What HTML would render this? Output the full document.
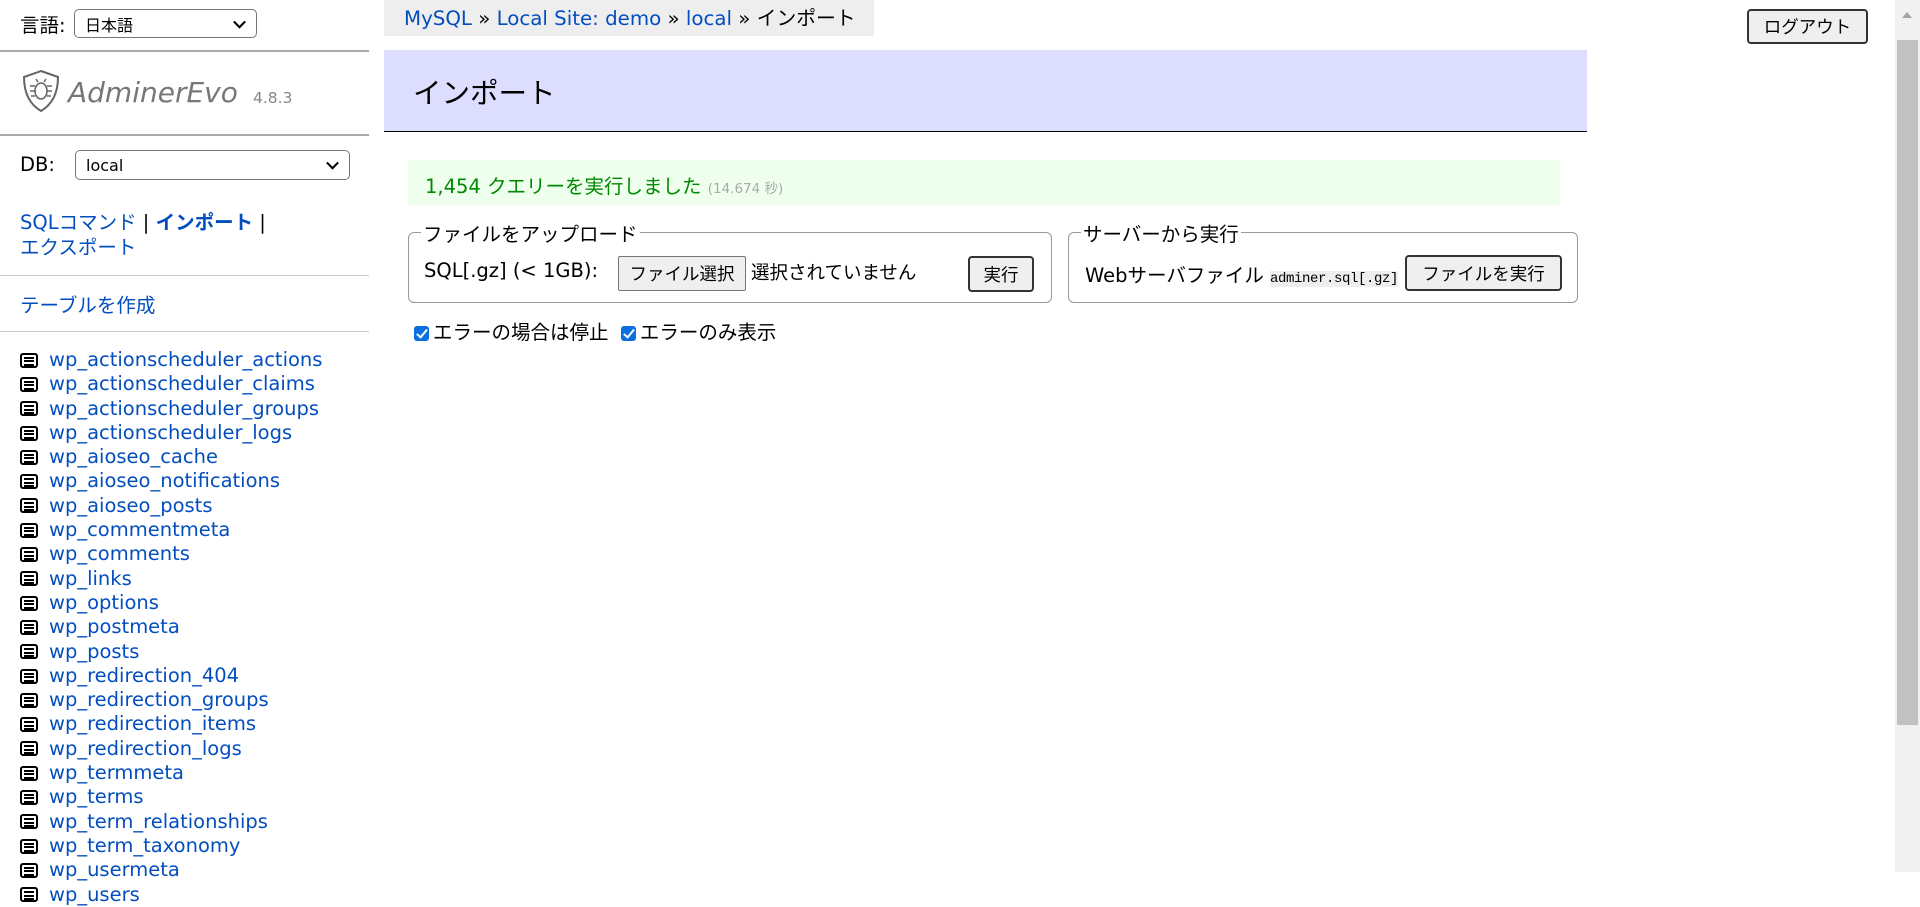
<!DOCTYPE html>
<html><head><meta charset="utf-8">
<style>
*{box-sizing:border-box}
body{margin:0;width:1920px;height:872px;overflow:hidden;background:#fff;font-family:"DejaVu Sans","Noto Sans CJK JP",sans-serif;font-size:19.5px;color:#000;position:relative}
a{color:#034ebf;text-decoration:none}
.abs{position:absolute}
.hr{position:absolute;left:0;width:369px;height:2px;background:#aaa}
.sel{position:absolute;border:1px solid #767676;border-radius:5px;background:#fff;font-size:16px;padding-left:10px;display:flex;align-items:center}
.sel:after{content:"";position:absolute;right:12px;top:50%;width:7px;height:7px;border-right:2px solid #000;border-bottom:2px solid #000;transform:translateY(-70%) rotate(45deg)}
.list{position:absolute;left:20px;top:348px;line-height:24.3px;font-size:19.5px}
.list div{display:flex;align-items:center;height:24.3px}
.ic{width:18px;height:15px;border:2px solid #000;border-radius:3px;margin-right:11px;position:relative;flex:none;background:
linear-gradient(#000,#000) 2px 2px/10px 2px no-repeat,linear-gradient(#000,#000) 2px 5.5px/10px 2px no-repeat,linear-gradient(#000,#000) 2px 9px/10px 2px no-repeat}
.btn{position:absolute;background:#efefef;border:2px solid #333;border-radius:4px;font-size:17.5px;display:flex;align-items:center;justify-content:center}
fieldset{position:absolute;border:1px solid #999;border-radius:6px;margin:0;padding:0}
legend{font-size:19.5px;padding:0 2px;margin-left:12px}
.cb{display:inline-block;width:15px;height:15px;background:#0b6fe0;border-radius:3px;vertical-align:-2px;position:relative;margin-right:4px}
.cb:after{content:"";position:absolute;left:5px;top:1px;width:4px;height:9px;border-right:2px solid #fff;border-bottom:2px solid #fff;transform:rotate(40deg)}
</style></head><body>
<!-- sidebar -->
<div class="abs" style="left:20px;top:9px;font-size:19.5px">言語:</div>
<div class="sel" style="left:74px;top:9px;width:183px;height:29px">日本語</div>
<div class="hr" style="top:50px"></div>
<svg class="abs" style="left:21px;top:69px" width="40" height="44" viewBox="0 0 40 44"><path d="M20 2 L37 8 Q37 32 20 42 Q3 32 3 8 Z" fill="none" stroke="#666" stroke-width="2"/><ellipse cx="20" cy="22" rx="6" ry="8" fill="none" stroke="#666" stroke-width="1.6"/><path d="M14 17 H9 M14 22 H9 M14 27 H10 M26 17 H31 M26 22 H31 M26 27 H30 M17 13 L15 10 M23 13 L25 10" stroke="#666" stroke-width="1.5"/></svg>
<div class="abs" style="left:68px;top:76px;font-size:28px;font-style:italic;color:#777">AdminerEvo</div>
<div class="abs" style="left:253px;top:89px;font-size:15.5px;color:#888">4.8.3</div>
<div class="hr" style="top:134px"></div>
<div class="abs" style="left:20px;top:153px">DB:</div>
<div class="sel" style="left:75px;top:150px;width:275px;height:30px">local</div>
<div class="abs" style="left:20px;top:210px;line-height:25px"><a href="#">SQLコマンド</a> | <a href="#" style="font-weight:bold">インポート</a> |<br><a href="#">エクスポート</a></div>
<div class="hr" style="top:275px;height:1px;background:#ccc"></div>
<div class="abs" style="left:20px;top:289px"><a href="#">テーブルを作成</a></div>
<div class="hr" style="top:331px;height:1px;background:#ccc"></div>
<div class="list">
<div><span class="ic"></span><a href="#">wp_actionscheduler_actions</a></div>
<div><span class="ic"></span><a href="#">wp_actionscheduler_claims</a></div>
<div><span class="ic"></span><a href="#">wp_actionscheduler_groups</a></div>
<div><span class="ic"></span><a href="#">wp_actionscheduler_logs</a></div>
<div><span class="ic"></span><a href="#">wp_aioseo_cache</a></div>
<div><span class="ic"></span><a href="#">wp_aioseo_notifications</a></div>
<div><span class="ic"></span><a href="#">wp_aioseo_posts</a></div>
<div><span class="ic"></span><a href="#">wp_commentmeta</a></div>
<div><span class="ic"></span><a href="#">wp_comments</a></div>
<div><span class="ic"></span><a href="#">wp_links</a></div>
<div><span class="ic"></span><a href="#">wp_options</a></div>
<div><span class="ic"></span><a href="#">wp_postmeta</a></div>
<div><span class="ic"></span><a href="#">wp_posts</a></div>
<div><span class="ic"></span><a href="#">wp_redirection_404</a></div>
<div><span class="ic"></span><a href="#">wp_redirection_groups</a></div>
<div><span class="ic"></span><a href="#">wp_redirection_items</a></div>
<div><span class="ic"></span><a href="#">wp_redirection_logs</a></div>
<div><span class="ic"></span><a href="#">wp_termmeta</a></div>
<div><span class="ic"></span><a href="#">wp_terms</a></div>
<div><span class="ic"></span><a href="#">wp_term_relationships</a></div>
<div><span class="ic"></span><a href="#">wp_term_taxonomy</a></div>
<div><span class="ic"></span><a href="#">wp_usermeta</a></div>
<div><span class="ic"></span><a href="#">wp_users</a></div>
</div>
<!-- content -->
<div class="abs" style="left:384px;top:0;width:490px;height:36px;background:#eee;padding:2px 0 0 20px;font-size:19.8px;white-space:nowrap"><a href="#">MySQL</a> » <a href="#">Local Site: demo</a> » <a href="#">local</a> » インポート</div>
<div class="btn" style="left:1747px;top:9px;width:121px;height:35px">ログアウト</div>
<div class="abs" style="left:384px;top:50px;width:1203px;height:82px;background:#ddf;border-bottom:1px solid #000;padding:21px 0 0 29px;font-size:28.5px">インポート</div>
<div class="abs" style="left:408px;top:160px;width:1152px;height:45px;background:#efe;padding:10px 0 0 17px;color:#080">1,454 クエリーを実行しました <span style="color:#aaa;font-size:13.5px">(14.674 秒)</span></div>
<fieldset style="left:408px;top:218px;width:644px;height:85px"><legend>ファイルをアップロード</legend></fieldset>
<div class="abs" style="left:424px;top:259px">SQL[.gz] (&lt; 1GB):</div>
<div class="abs" style="left:618px;top:256px;width:128px;height:35px;background:#efefef;border:1px solid #767676;border-radius:2px;font-size:17.5px;display:flex;align-items:center;justify-content:center">ファイル選択</div>
<div class="abs" style="left:751px;top:259px;font-size:18.5px">選択されていません</div>
<div class="btn" style="left:968px;top:256px;width:66px;height:36px">実行</div>
<fieldset style="left:1068px;top:218px;width:510px;height:85px"><legend>サーバーから実行</legend></fieldset>
<div class="abs" style="left:1085px;top:259px">Webサーバファイル <code style="font-family:'Liberation Mono',monospace;font-size:14px;background:#eee;letter-spacing:-0.4px">adminer.sql[.gz]</code></div>
<div class="btn" style="left:1405px;top:255px;width:157px;height:36px">ファイルを実行</div>
<div class="abs" style="left:414px;top:316px"><span class="cb"></span>エラーの場合は停止&nbsp; <span class="cb"></span>エラーのみ表示</div>
<!-- scrollbar -->
<div class="abs" style="left:1895px;top:0;width:25px;height:872px;background:#f1f1f1"></div>
<div class="abs" style="left:1897px;top:40px;width:21px;height:685px;background:#c1c1c1"></div>
<div class="abs" style="left:1902px;top:12px;width:0;height:0;border-left:5px solid transparent;border-right:5px solid transparent;border-bottom:6px solid #a3a3a3"></div>
</body></html>
